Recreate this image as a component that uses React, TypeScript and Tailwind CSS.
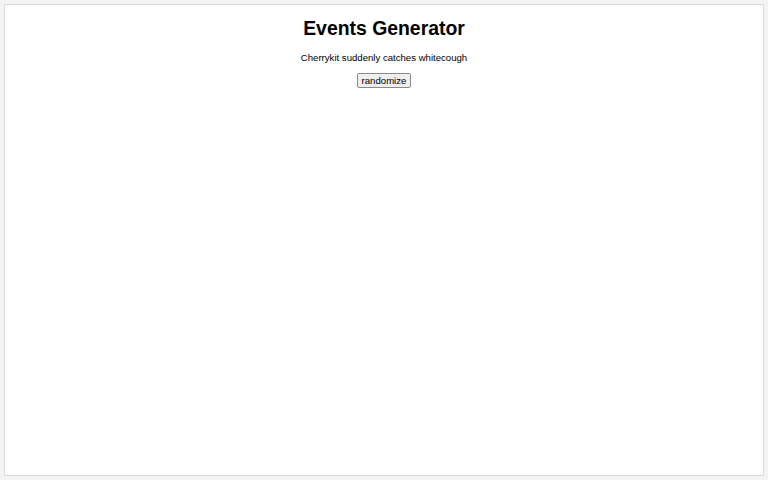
export default function App() {
  return (
    <div className="h-[480px] w-[768px] bg-[#f3f3f3] p-[4px] font-['Liberation_Sans',Arial,sans-serif] text-black">
      <div className="flex h-full flex-col items-center border border-[#dcdcdc] bg-white">
        <h1 className="mt-[11px] text-[19.4px] font-bold leading-[24px]">Events Generator</h1>
        <p className="mt-[12px] text-[9.6px] leading-[12px]">Cherrykit suddenly catches whitecough</p>
        <button className="mt-[9px] h-[15px] rounded-[2px] border border-[#8a8a8a] bg-[#efefef] px-[4px] text-[9.6px] leading-[11px]">
          randomize
        </button>
      </div>
    </div>
  );
}
